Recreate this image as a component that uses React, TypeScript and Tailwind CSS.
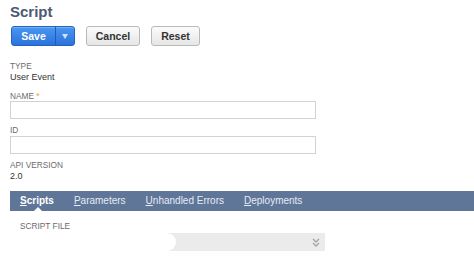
export default function App() {
  const tabs = [
    { key: 'S', rest: 'cripts', active: true },
    { key: 'P', rest: 'arameters', active: false },
    { key: 'U', rest: 'nhandled Errors', active: false },
    { key: 'D', rest: 'eployments', active: false },
  ];

  return (
    <div className="w-[474px] h-[262px] overflow-hidden bg-white pl-[10px] pt-[3px] font-['Liberation_Sans',Arial,sans-serif]">
      <h1 className="text-[15px] leading-[18px] font-bold text-[#4b5a73]">Script</h1>

      <div className="mt-[5px] ml-[1px] flex items-center gap-[11px]">
        <div className="flex h-[20px] rounded-[3px] border border-[#2463c4] bg-gradient-to-b from-[#4a97f0] to-[#2b72dc] shadow-[inset_0_1px_0_rgba(255,255,255,0.25)]">
          <button className="w-[43px] text-[10.5px] font-bold text-white leading-[18px]">Save</button>
          <div className="w-px bg-[#1f5cb8]" />
          <button className="w-[18px] flex items-center justify-center">
            <span className="block h-0 w-0 border-l-[3px] border-r-[3px] border-t-[5px] border-l-transparent border-r-transparent border-t-[#cfe2fb]" />
          </button>
        </div>
        <button className="h-[20px] w-[54px] rounded-[3px] border border-[#b9b9b9] bg-gradient-to-b from-[#fbfbfb] to-[#e6e6e6] text-[10.5px] font-bold text-[#333] leading-[18px]">
          Cancel
        </button>
        <button className="h-[20px] w-[49px] rounded-[3px] border border-[#b9b9b9] bg-gradient-to-b from-[#fbfbfb] to-[#e6e6e6] text-[10.5px] font-bold text-[#333] leading-[18px]">
          Reset
        </button>
      </div>

      <div className="mt-[15px] text-[8.3px] leading-[11px] text-[#6b6b6b] uppercase">Type</div>
      <div className="text-[9px] leading-[11px] text-[#333]">User Event</div>

      <div className="mt-[8px] text-[8.3px] leading-[10px] text-[#6b6b6b]">
        NAME <span className="text-[#e5a23a]">*</span>
      </div>
      <input className="block mt-0 h-[18px] w-[306px] border border-[#d2d2d2] bg-white outline-none" />

      <div className="mt-[6px] text-[8.3px] leading-[11px] text-[#6b6b6b]">ID</div>
      <input className="block h-[18px] w-[306px] border border-[#d2d2d2] bg-white outline-none" />

      <div className="mt-[6px] text-[8.3px] leading-[11px] text-[#6b6b6b]">API VERSION</div>
      <div className="text-[9px] leading-[11px] text-[#333]">2.0</div>

      <div className="mt-[9px] flex h-[20px] items-center gap-[20px] bg-[#5f7699] pl-[10px]">
        {tabs.map((t) => (
          <div
            key={t.key}
            className={`relative text-[10px] leading-[20px] ${t.active ? 'font-bold text-white' : 'text-[#e6ebf3]'}`}
          >
            <span className="underline underline-offset-[1px]">{t.key}</span>
            {t.rest}
            {t.active && (
              <span className="absolute bottom-0 left-[14px] block h-0 w-0 border-l-[4px] border-r-[4px] border-b-[4px] border-l-transparent border-r-transparent border-b-white" />
            )}
          </div>
        ))}
      </div>

      <div className="pl-[10px]">
        <div className="mt-[10px] text-[8.3px] leading-[11px] text-[#6b6b6b]">SCRIPT FILE</div>
        <div className="relative mt-[1px] flex h-[18px] w-[305px] items-center justify-end bg-[#ebebeb] pr-[5px]">
          <div className="absolute left-0 top-0 h-[18px] w-[156px] rounded-r-[9px] bg-white" />
          <svg width="8" height="9" viewBox="0 0 8 9" fill="none" stroke="#a3a3a3" strokeWidth="1.3">
            <polyline points="1,1 4,4 7,1" />
            <polyline points="1,5 4,8 7,5" />
          </svg>
        </div>
      </div>
    </div>
  );
}
